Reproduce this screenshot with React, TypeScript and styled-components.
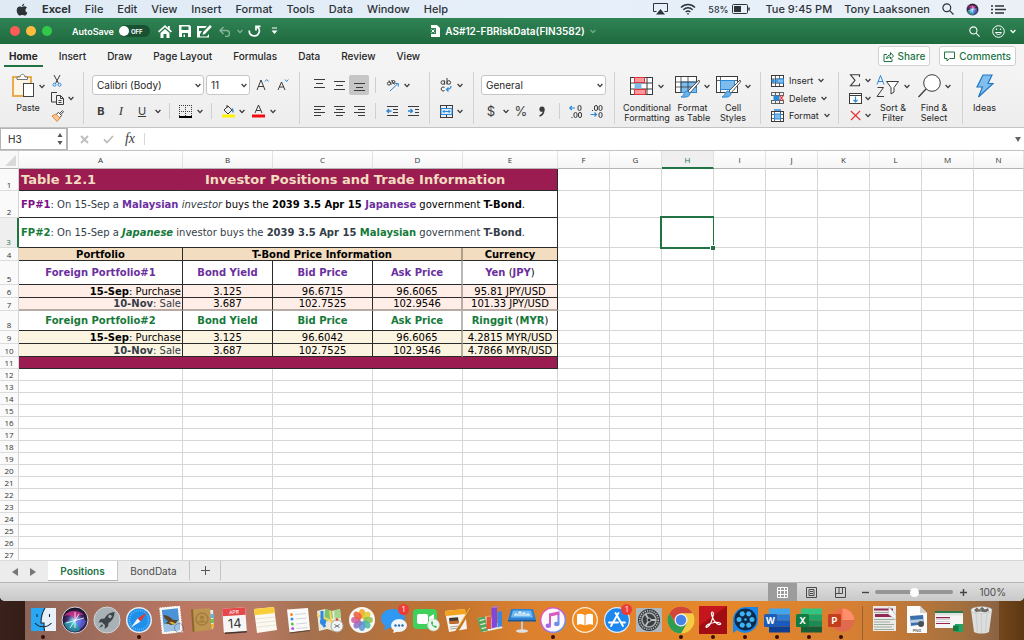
import React from "react";
import styled, { createGlobalStyle, css } from "styled-components";

/* ------------------------------------------------------------------ */
/* Base                                                                 */
/* ------------------------------------------------------------------ */

const UI = `Inter, "Liberation Sans", sans-serif`;
const SHEET = `"DejaVu Sans", sans-serif`;
const GREEN = "#217346";
const BLUE = "#2b88d8";
const INK = "#3b3b3b";

const GlobalStyle = createGlobalStyle`
  *, *::before, *::after { box-sizing: border-box; }
  body {
    margin: 0;
    font-family: ${UI};
    color: #262626;
    background: linear-gradient(90deg, #3a211b 0, #2c1713 60px, #a85a1c 50%, #7a4a1e 97%, #5c3813 100%);
  }
  button, input, select { font: inherit; color: inherit; margin: 0; }
  svg { display: block; flex: none; }
`;

const plainButton = css`
  border: 0;
  padding: 0;
  background: none;
  display: flex;
  align-items: center;
  justify-content: center;
  white-space: nowrap;
`;

/* ------------------------------------------------------------------ */
/* System menu bar                                                      */
/* ------------------------------------------------------------------ */

const MenuBar = styled.header`
  display: flex;
  align-items: center;
  justify-content: space-between;
  height: 18px;
  padding: 0 18px 0 16px;
  background: linear-gradient(90deg, #dfeaf5, #e6effa 60%, #eaf0f6);
  font-size: 11px;
  color: #2e3338;
`;

const MenuList = styled.nav`
  display: flex;
  align-items: center;
  gap: 14px;
`;

const MenuItem = styled.button<{ $strong?: boolean }>`
  ${plainButton}
  font-size: 11px;
  line-height: 18px;
  font-weight: ${(p) => (p.$strong ? 700 : 500)};
`;

const StatusItems = styled.div`
  display: flex;
  align-items: center;
  gap: 12px;
  font-weight: 500;
  white-space: nowrap;
`;

const Battery = styled.span`
  display: flex;
  align-items: center;
  gap: 4px;
  padding-right: 3px;
  font-size: 9px;
`;

/* ------------------------------------------------------------------ */
/* Window title bar                                                     */
/* ------------------------------------------------------------------ */

const Window = styled.div`
  border-radius: 0 0 5px 5px;
  overflow: hidden;
  background: #fff;
`;

const TitleBar = styled.div`
  display: grid;
  grid-template-columns: 1fr auto 1fr;
  align-items: center;
  height: 26px;
  padding: 0 8px 0 10px;
  background: linear-gradient(#2f8354, #1f6a3f);
  color: #fff;
`;

const TitleTools = styled.div`
  display: flex;
  align-items: center;
`;

const Lights = styled.div`
  display: flex;
  gap: 6px;
  margin-right: 20px;
`;

const Light = styled.button<{ $color: string }>`
  ${plainButton}
  width: 10px;
  height: 10px;
  border-radius: 50%;
  background: ${(p) => p.$color};
`;

const AutoSave = styled.label`
  display: flex;
  align-items: center;
  gap: 5px;
  margin-right: 5px;
  font-size: 9px;
  font-weight: 600;
`;

const Switch = styled.span`
  display: flex;
  align-items: center;
  gap: 2px;
  width: 31px;
  height: 12px;
  border-radius: 6px;
  background: #1a5132;
  font-size: 6px;
  font-weight: 700;
`;

const Knob = styled.input`
  appearance: none;
  width: 10px;
  height: 10px;
  border-radius: 50%;
  background: #fff;
`;

const TitleButton = styled.button<{ $w?: number; $dim?: boolean }>`
  ${plainButton}
  width: ${(p) => p.$w ?? 20}px;
  height: 20px;
  opacity: ${(p) => (p.$dim ? 0.45 : 1)};
`;

const DocTitle = styled.h1`
  display: flex;
  align-items: center;
  gap: 5px;
  margin: 0;
  font-size: 10px;
  font-weight: 600;
  white-space: nowrap;
`;

const TitleEnd = styled(TitleTools)`
  justify-content: flex-end;
`;

/* ------------------------------------------------------------------ */
/* Ribbon                                                               */
/* ------------------------------------------------------------------ */

const TabRow = styled.div`
  display: flex;
  align-items: center;
  justify-content: space-between;
  height: 24px;
  padding: 0 8px 0 4px;
  background: #f4f4f4;
`;

const Tabs = styled.div`
  display: flex;
  gap: 11px;
`;

const RibbonTab = styled.button<{ $active?: boolean }>`
  ${plainButton}
  height: 22px;
  padding: 2px 5px 0;
  font-size: 10px;
  font-weight: ${(p) => (p.$active ? 700 : 500)};
  border-bottom: 2px solid ${(p) => (p.$active ? GREEN : "transparent")};
`;

const Actions = styled.div`
  display: flex;
  gap: 9px;
`;

const ActionButton = styled.button`
  ${plainButton}
  gap: 4px;
  height: 20px;
  padding: 0 4px;
  border: 1px solid #d0d0d0;
  border-radius: 3px;
  background: #fff;
  color: ${GREEN};
  font-size: 10px;
  font-weight: 500;
`;

const Ribbon = styled.div`
  display: flex;
  height: 59px;
  padding: 4px 0 3px;
  background: linear-gradient(#f4f4f4, #ededed);
`;

const Group = styled.div<{ $w?: number; $pad: number; $last?: boolean }>`
  display: flex;
  flex: none;
  width: ${(p) => (p.$w ? p.$w + "px" : "auto")};
  padding-left: ${(p) => p.$pad}px;
  border-right: ${(p) => (p.$last ? 0 : 1)}px solid #d2d2d2;
`;

const Stack = styled.div`
  display: flex;
  flex-direction: column;
  justify-content: space-between;
`;

const Row = styled.div`
  display: flex;
  align-items: center;
  height: 26px;
`;

const SmallRow = styled.div`
  display: flex;
  align-items: center;
  height: 17px;
`;

const Tool = styled.button<{ $w: number; $on?: boolean }>`
  ${plainButton}
  width: ${(p) => p.$w}px;
  height: 20px;
  border-radius: 2px;
  background: ${(p) => (p.$on ? "#c6c6c6" : "none")};
  color: ${INK};
  font-size: 11px;
`;

const Divider = styled.span<{ $w: number }>`
  display: flex;
  justify-content: center;
  width: ${(p) => p.$w}px;
  height: 16px;
  &::before {
    content: "";
    width: 1px;
    background: #cfcfcf;
  }
`;

const SelectBox = styled.span<{ $w: number }>`
  display: grid;
  align-items: center;
  width: ${(p) => p.$w}px;
  & > * { grid-area: 1 / 1; }
  & > svg { justify-self: end; margin-right: 3px; pointer-events: none; }
  & + & { margin-left: 2px; }
`;

const Select = styled.select`
  appearance: none;
  width: 100%;
  height: 20px;
  padding: 0 4px;
  border: 1px solid #c6c6c6;
  border-radius: 3px;
  background: #fff;
  font-size: 10px;
`;

const BigTool = styled.button<{ $w: number }>`
  ${plainButton}
  flex-direction: column;
  justify-content: flex-start;
  width: ${(p) => p.$w}px;
  gap: 3px;
  font-size: 9px;
  font-weight: 400;
  line-height: 10px;
`;

const BigIcon = styled.span`
  display: flex;
  align-items: center;
  gap: 4px;
  height: 28px;
`;

const CellTool = styled.button`
  ${plainButton}
  justify-content: flex-start;
  gap: 5px;
  height: 17px;
  font-size: 9px;
  font-weight: 400;
`;

const SerifI = styled.i`
  font-family: "Liberation Serif", serif;
  font-size: 13px;
`;

const Glyph = styled.span`
  font-size: 13px;
  line-height: 20px;
`;

const FxLabel = styled.i`
  font-family: "Liberation Serif", serif;
  font-size: 14px;
`;

/* ------------------------------------------------------------------ */
/* Formula bar                                                          */
/* ------------------------------------------------------------------ */

const FormulaBar = styled.div`
  display: flex;
  align-items: center;
  height: 24px;
  border-top: 1px solid #c2c2c2;
  border-bottom: 1px solid #c2c2c2;
  background: #fff;
  padding-right: 2px;
`;

const NameBox = styled.label`
  display: flex;
  align-items: center;
  justify-content: space-between;
  width: 68px;
  height: 22px;
  padding: 0 3px 0 7px;
  border: 1px solid #b4b4b4;
  border-right-width: 2px;
`;

const NameInput = styled.input`
  width: 40px;
  border: 0;
  padding: 0;
  font-size: 10px;
  background: none;
`;

const FormulaInput = styled.input`
  flex: 1;
  min-width: 0;
  height: 12px;
  border: 0;
  border-left: 1px solid #d8d8d8;
  padding: 0 4px;
  background: none;
  font-size: 10px;
`;

/* ------------------------------------------------------------------ */
/* Grid                                                                 */
/* ------------------------------------------------------------------ */

const Grid = styled.table`
  width: 100%;
  table-layout: fixed;
  border-collapse: separate;
  border-spacing: 0;
  font-family: ${SHEET};
  font-size: 10px;
  line-height: 11px;
`;

const ColHead = styled.th<{ $active?: boolean }>`
  height: 18px;
  padding: 0;
  font-family: "Open Sans", sans-serif;
  font-size: 8px;
  font-weight: 400;
  color: ${(p) => (p.$active ? GREEN : "#333")};
  background: ${(p) => (p.$active ? "#efefef" : "linear-gradient(#fff, #f5f5f5)")};
  border-right: 1px solid #e2e2e2;
  border-bottom: ${(p) => (p.$active ? `2px solid ${GREEN}` : "1px solid #b4b4b4")};
`;

const Corner = styled.th`
  padding: 0 2px 2px 5px;
  vertical-align: bottom;
  background: #f8f8f8;
  border-right: 1px solid #e2e2e2;
  border-bottom: 1px solid #b4b4b4;
`;

const SheetRow = styled.tr<{ $h: number }>`
  height: ${(p) => p.$h}px;
`;

const RowHead = styled.th<{ $active?: boolean }>`
  padding: 0;
  vertical-align: bottom;
  font-family: "Open Sans", sans-serif;
  font-size: 8px;
  line-height: 10px;
  font-weight: 400;
  color: ${(p) => (p.$active ? GREEN : "#333")};
  background: ${(p) => (p.$active ? "#efefef" : "#fafafa")};
  border-right: ${(p) => (p.$active ? `2px solid ${GREEN}` : "1px solid #d4d4d4")};
  border-bottom: 1px solid #dcdcdc;
`;

const gridLine = "1px solid #d6d6d6";
const darkLine = "1px solid #2a2a2a";
const softLine = "2px solid rgba(0, 0, 0, 0.28)";

const Cell = styled.td`
  padding: 0;
  border-right: ${gridLine};
  border-bottom: ${gridLine};
`;

const SelectedCell = styled(Cell)`
  position: relative;
  &::before {
    content: "";
    position: absolute;
    inset: -2px -1px -2px -2px;
    border: 2px solid ${GREEN};
    border-right-width: 1px;
  }
  &::after {
    content: "";
    position: absolute;
    right: -2px;
    bottom: -3px;
    width: 5px;
    height: 5px;
    background: ${GREEN};
    border: 1px solid #fff;
    border-right: 0;
    border-bottom: 0;
  }
`;

const DataCell = styled.td<{
  $bg?: string;
  $align?: "left" | "right" | "center";
  $bold?: boolean;
  $color?: string;
  $softRight?: boolean;
  $softBottom?: boolean;
}>`
  padding: 0 1px;
  text-align: ${(p) => p.$align ?? "center"};
  font-weight: ${(p) => (p.$bold ? 700 : 400)};
  color: ${(p) => p.$color ?? "#000"};
  background: ${(p) => p.$bg ?? "#fff"};
  border-right: ${(p) => (p.$softRight ? softLine : darkLine)};
  border-bottom: ${(p) => (p.$softBottom ? softLine : darkLine)};
  white-space: nowrap;
`;

const BannerCell = styled(DataCell)<{ $indent: number }>`
  padding-left: ${(p) => p.$indent}px;
  border-right-color: ${(p) => p.$bg};
  text-align: left;
  font-size: 13px;
  line-height: 16px;
  &:nth-of-type(2) { border-right-color: #2a2a2a; }
`;

const NoteCell = styled(DataCell)`
  padding-left: 2px;
  text-align: left;
`;

const Ink = styled.span<{ $c?: string; $b?: boolean; $i?: boolean }>`
  color: ${(p) => p.$c ?? "inherit"};
  font-weight: ${(p) => (p.$b ? 700 : 400)};
  font-style: ${(p) => (p.$i ? "italic" : "normal")};
`;

/* ------------------------------------------------------------------ */
/* Sheet tabs and status bar                                            */
/* ------------------------------------------------------------------ */

const SheetBar = styled.div`
  display: flex;
  height: 22px;
  background: #ececec;
  border-bottom: 1px solid #b8b8b8;
`;

const SheetNav = styled.div`
  display: flex;
  align-items: center;
  gap: 2px;
  width: 48px;
  padding-left: 7px;
`;

const SheetTab = styled.button<{ $w: number; $active?: boolean }>`
  ${plainButton}
  width: ${(p) => p.$w}px;
  height: 20px;
  font-size: 10px;
  font-weight: ${(p) => (p.$active ? 600 : 400)};
  color: ${(p) => (p.$active ? GREEN : "#4c4c4c")};
  background: ${(p) => (p.$active ? "#fff" : "none")};
  border-right: 1px solid #c4c4c4;
  border-bottom: 1px solid ${(p) => (p.$active ? "#b0b0b0" : "transparent")};
`;

const StatusBar = styled.div`
  display: flex;
  align-items: center;
  justify-content: flex-end;
  height: 18px;
  padding-right: 18px;
  background: linear-gradient(#dedede, #c9c9c9);
  color: #4a4a4a;
`;

const ViewButton = styled.button<{ $on?: boolean }>`
  ${plainButton}
  width: 29px;
  height: 18px;
  background: ${(p) => (p.$on ? "#9c9c9c" : "none")};
  color: ${(p) => (p.$on ? "#fff" : "#4a4a4a")};
`;

const ZoomButton = styled.button`
  ${plainButton}
  width: 20px;
  height: 18px;
`;

const ZoomRange = styled.input`
  appearance: none;
  width: 78px;
  height: 4px;
  border-radius: 2px;
  background: #969696;
  &::-webkit-slider-thumb {
    appearance: none;
    width: 9px;
    height: 9px;
    border-radius: 50%;
    background: #fff;
    border: 0;
  }
`;

const ZoomValue = styled.span`
  width: 33px;
  text-align: right;
  font-size: 10px;
`;

/* ------------------------------------------------------------------ */
/* Dock                                                                 */
/* ------------------------------------------------------------------ */

const Dock = styled.nav`
  display: flex;
  width: 95%;
  min-width: 974px;
  height: 39px;
  margin: 0 auto;
  padding: 5px 2px 0;
  background: linear-gradient(90deg, #8b6458, #bd7862 17%, #b97a66 24%, #a3704f 29%, #c4742f 44%, #dd812e 52%, #e58829 72%, #d67f33 85%, #a3703f 96%, #8a6345);
`;

const DockApps = styled.div`
  display: flex;
  flex: 26;
`;

const DockItem = styled.button`
  ${plainButton}
  position: relative;
  flex: 1;
  flex-direction: column;
  justify-content: flex-start;
  height: 34px;
`;

const DockDocs = styled(DockApps)`
  flex: 4;
  margin-left: 6px;
  border-left: 1px solid #9a6230;
  padding-left: 6px;
`;

const Running = styled.span`
  width: 4px;
  height: 4px;
  margin-top: 1px;
  border-radius: 50%;
  background: #3a0d06;
`;

const Badge = styled.span`
  position: absolute;
  top: -2px;
  right: 1px;
  width: 11px;
  height: 11px;
  border-radius: 50%;
  background: #ee3b36;
  color: #fff;
  font-size: 7px;
  line-height: 11px;
`;

/* ------------------------------------------------------------------ */
/* Small icons                                                          */
/* ------------------------------------------------------------------ */

const Chevron = ({ color = INK }: { color?: string }) => (
  <svg width="6" height="5" viewBox="0 0 6 5" fill="none" stroke={color} strokeWidth="1.3">
    <path d="M.6 1 3 3.6 5.4 1" />
  </svg>
);

const Svg = ({ w, h = w, children, ...rest }: any) => (
  <svg width={w} height={h} viewBox={`0 0 ${w} ${h}`} fill="none" stroke={INK} strokeWidth="1" {...rest}>
    {children}
  </svg>
);

const Magnifier = ({ size = 12, color = "#2e3338" }) => (
  <svg width={size} height={size} viewBox="0 0 12 12" fill="none" stroke={color} strokeWidth="1.2">
    <circle cx="4.8" cy="4.8" r="3.9" />
    <path d="m7.7 7.7 3.8 3.8" />
  </svg>
);

const AppleLogo = () => (
  <svg width="12" height="13" viewBox="0 0 12 13" fill="#2e3338">
    <path d="M8.2.8c.1 1.3-1 2.5-2.2 2.5C5.9 2 7 .9 8.2.8ZM6 4c.5 0 1.3-.7 2.400-.7 1 0 2 .6 2.500 1.400-2.100 1.200-1.800 4.200.5 5-.5 1.300-1.500 2.900-2.700 2.900-.9 0-1.200-.6-2.400-.6-1.100 0-1.500.6-2.300.6C2.400 12.600.7 9.700.7 7.200c0-2.500 1.500-3.800 3-3.800 1 0 1.800.6 2.300.6Z" />
  </svg>
);

const LinesIcon = ({ rows }: { rows: [number, number, number][] }) => (
  <Svg w={13} h={13}>
    {rows.map(([x1, x2, y], i) => (
      <path key={i} d={`M${x1} ${y}.5H${x2}`} />
    ))}
  </Svg>
);

const SiriOrb = ({ size }: { size: number }) => (
  <svg width={size} height={size} viewBox="0 0 28 28">
    <defs>
      <radialGradient id="orb" cx=".5" cy=".55" r=".5">
        <stop offset="0" stopColor="#f4faff" />
        <stop offset=".25" stopColor="#7fb6e8" />
        <stop offset=".6" stopColor="#4b2d72" />
        <stop offset="1" stopColor="#171426" />
      </radialGradient>
    </defs>
    <circle cx="14" cy="14" r="13" fill="url(#orb)" stroke="#d9d3e0" strokeWidth="1" />
    <path d="M3 10c5-6 13-7 20-1-5-1-7 2-9 5-2-4-6-6-11-4Z" fill="#e0318c" opacity=".75" />
    <path d="M3 17c4-3 8-3 11-2 3 3 5 6 5 9-7 4-14 0-16-7Z" fill="#1ec8c0" opacity=".6" />
    <path d="M14 15c4-3 8-3 11 0-1 4-3 6-6 8Z" fill="#5a67e8" opacity=".7" />
    <path d="m5 17 18-5M14 6v16M9 22l9-14" stroke="#fff" strokeWidth="1" opacity=".8" />
  </svg>
);

/* ------------------------------------------------------------------ */
/* Dock icons                                                           */
/* ------------------------------------------------------------------ */

const D = ({ children }: { children: React.ReactNode }) => (
  <svg width="28" height="28" viewBox="0 0 28 28">{children}</svg>
);

const Office = ({ shades, tile, letter, round }: { shades: string[]; tile: string; letter: string; round?: boolean }) => (
  <D>
    {round ? (
      <>
        <circle cx="15.500" cy="14" r="11.500" fill={shades[0]} />
        <path d="M15.500 2.500A11.500 11.500 0 0 1 27 14H15.500Z" fill={shades[1]} />
        <path d="M4 14h23a11.500 11.500 0 0 1-23 0Z" fill={shades[2]} />
      </>
    ) : (
      shades.map((c, i) => <rect key={c} x="6" y={2.5 + i * 6} width="21" height="6" fill={c} />)
    )}
    <rect x="1" y="8" width="13" height="13" rx="1.500" fill={tile} />
    <text x="7.500" y="18" textAnchor="middle" fontFamily={UI} fontSize="9" fontWeight="700" fill="#fff">{letter}</text>
  </D>
);

const apps: { name: string; icon: React.ReactNode; running?: boolean; badge?: string }[] = [
  {
    name: "Finder", running: true,
    icon: (
      <D>
        <rect x="2" y="2" width="25" height="23" rx="1" fill="#2aa7f4" />
        <path d="M16 2h11v23H15.500c-.5-3-.7-6-.6-8H12c0-6 1.500-11 4-15Z" fill="#e8f1f9" />
        <path d="M8 8v3M20.500 8v3M6 17c4 5 12 5 16.500 0M16 2c-2.500 4-4 9-4 15h3c-.1 3 .1 6 .6 8" stroke="#1b2a3a" strokeWidth="1.100" fill="none" />
      </D>
    ),
  },
  { name: "Siri", icon: <SiriOrb size={28} /> },
  {
    name: "Launchpad",
    icon: (
      <D>
        <circle cx="14" cy="14" r="13" fill="#a9b1b6" stroke="#cfd4d6" />
        <path d="M21.500 6c-5 .3-8 3-10 6.500L7.500 13 5.500 16.500l3.500-.3 3 3-.5 3.800 3.500-2.500.5-3.500c3.500-2 6-5.500 6-11Z" fill="#3f464b" />
        <circle cx="17" cy="10.500" r="1.700" fill="#a9b1b6" />
        <path d="m9 18-3 4 4-2Z" fill="#3f464b" />
      </D>
    ),
  },
  {
    name: "Safari", running: true,
    icon: (
      <D>
        <circle cx="14" cy="14" r="13" fill="#e8ecef" />
        <circle cx="14" cy="14" r="11.500" fill="#1e8fea" />
        <circle cx="14" cy="14" r="9.500" fill="none" stroke="#8fd0ff" strokeWidth="1.500" strokeDasharray=".6 1.400" />
        <path d="m22 6.500-6.500 9-3-3Z" fill="#f2352c" />
        <path d="m6 21.500 6.500-9 3 3Z" fill="#f5f5f5" />
      </D>
    ),
  },
  {
    name: "Mail",
    icon: (
      <D>
        <g transform="rotate(-6 14 14)">
          <rect x="4" y="1" width="20" height="26" fill="#f7f7f2" stroke="#fff" strokeDasharray="1.500 1" />
          <rect x="6" y="3" width="16" height="22" fill="#4b93d8" />
          <path d="M6 18c5-3 10-1 16-3v10H6Z" fill="#9cc3e6" />
          <path d="M7 8c4 1 7 3 9 6l5 1-2 2c-2 2-5 3-7 1l-4-1 3-2c-2-2-4-4-4-7Z" fill="#5b4526" />
          <path d="M12 16c3-1 5 1 6 2l-3 1Z" fill="#d8b13a" />
        </g>
        <circle cx="22" cy="22" r="4.500" fill="none" stroke="#4a5560" strokeWidth=".8" opacity=".6" />
      </D>
    ),
  },
  {
    name: "Contacts",
    icon: (
      <D>
        <path d="M22 4h3l.8 17-2 3Z" fill="#e9eef0" />
        <path d="M23 8h3v4h-3Z" fill="#58b7e0" />
        <path d="M23 13h3v4h-3Z" fill="#76c05a" />
        <path d="M23 18h3v4h-3Z" fill="#f0b23a" />
        <path d="M3 3.500 22 2l1.500 22-19 2Z" fill="#bd9450" />
        <path d="m3 3.500 2-.2 1.500 22.500-2 .2Z" fill="#8b6531" />
        <circle cx="14" cy="13" r="6" fill="none" stroke="#a47c3e" strokeWidth="1.400" />
        <circle cx="14" cy="11.500" r="2" fill="#a47c3e" />
        <path d="M10 16.500c1-3 7-3 8 0Z" fill="#a47c3e" />
      </D>
    ),
  },
  {
    name: "Calendar",
    icon: (
      <D>
        <g transform="rotate(-4 14 14)">
          <rect x="3" y="2" width="23" height="24" rx="1" fill="#f6f6f6" />
          <path d="M3 2h23v7.500H3Z" fill="#e5484a" />
          <path d="M4 26.500h22" stroke="#46352e" strokeWidth="1.500" />
          <text x="14.500" y="8" textAnchor="middle" fontFamily={UI} fontSize="5" fill="#fff">APR</text>
          <text x="14.500" y="22" textAnchor="middle" fontFamily={UI} fontSize="13" fill="#333">14</text>
        </g>
      </D>
    ),
  },
  {
    name: "Notes",
    icon: (
      <D>
        <path d="M2 3 22 1l3 23-20 3Z" fill="#fbf9f0" />
        <path d="m2 3 20-2 .8 6-20 2.200Z" fill="#f9ce3a" />
        <path d="m4 13 19-2M4.500 17l19-2M5 21l19-2" stroke="#e2dfd2" strokeWidth=".8" />
      </D>
    ),
  },
  {
    name: "Reminders",
    icon: (
      <D>
        <path d="M3 3.500 24 2l2 22-20.500 2.500Z" fill="#fafafa" />
        <path d="m5.500 27 20.500-2.500" stroke="#5c4238" />
        <path d="m11 8.500 11-1M11.500 13l11-1M12 18l11-1M12.500 22.500l11-1" stroke="#d5d5d5" />
        <circle cx="7.500" cy="8.500" r="1.500" fill="#f58a2d" />
        <circle cx="8" cy="13" r="1.500" fill="#2f8ff0" />
        <circle cx="8.300" cy="18" r="1.500" fill="#5cc24a" />
        <circle cx="8.700" cy="22.500" r="1.500" fill="#b45be0" />
      </D>
    ),
  },
  {
    name: "Maps",
    icon: (
      <D>
        <path d="m1 5 8-2 7 2 8-2 2 20-8 2-7-2-8 2Z" fill="#e9ead9" />
        <path d="m9 3 7 2 1 7-9 5Z" fill="#7cc36a" />
        <path d="m18 4.500 6-1.500 1 9-6 1Z" fill="#a5d68d" />
        <path d="m1 9 22 9M14 5l3 20" stroke="#f5d265" strokeWidth="2" />
        <path d="M6 5v11l3 5" stroke="#2f86e6" strokeWidth="3" fill="none" />
        <circle cx="7" cy="16" r="3" fill="#2f86e6" />
        <circle cx="21" cy="20" r="6" fill="#f2f4f4" stroke="#a5adb0" />
        <path d="m18.500 18.500 5 3m0-3-5 3" stroke="#6c7479" />
        <circle cx="21" cy="13.500" r="1.200" fill="#e63c37" />
      </D>
    ),
  },
  {
    name: "Photos",
    icon: (
      <D>
        <circle cx="14" cy="14" r="13" fill="#f7f7f5" />
        {["#f6a21d", "#dfcb2c", "#8cc24a", "#4bb79a", "#5596d6", "#8a6fc4", "#d0589a", "#ec5a3e"].map((c, i) => (
          <ellipse key={c} cx="14" cy="7.800" rx="3.200" ry="4.700" fill={c} opacity=".85" transform={`rotate(${i * 45} 14 14)`} />
        ))}
      </D>
    ),
  },
  {
    name: "Messages", badge: "1",
    icon: (
      <D>
        <path d="M13 3c7 0 12 4 12 9.500S20 22 13 22c-1.500 0-3-.2-4-.5-1.500 1.500-3.500 2.500-6 2.500 1.500-1 2-2.500 2-4.500-2.500-1.700-4-4-4-7C1 7 6 3 13 3Z" fill="#2f98f2" />
        <ellipse cx="19" cy="19.500" rx="8" ry="6.500" fill="#f1f6fb" />
        <path d="m14 24-1 3 5-1.500Z" fill="#f1f6fb" />
        <circle cx="15.500" cy="19.500" r="1.200" fill="#2a6ba8" /><circle cx="19" cy="19.500" r="1.200" fill="#2a6ba8" /><circle cx="22.500" cy="19.500" r="1.200" fill="#2a6ba8" />
      </D>
    ),
  },
  {
    name: "FaceTime",
    icon: (
      <D>
        <rect x="1" y="3" width="24" height="20" rx="4" fill="#3ed15c" />
        <rect x="5" y="8" width="11" height="10" rx="2" fill="#fff" />
        <path d="m17 11 5-3v10l-5-3Z" fill="#fff" />
        <circle cx="21.500" cy="19" r="6" fill="#ecf6ee" stroke="#b9cabc" strokeWidth=".6" />
        <path d="M19 16c0 3 2 5 5 6l1-1.500-2-1-1 .6c-.8-.5-1.300-1.200-1.500-2l.7-.8-.7-2Z" fill="#34b64f" />
      </D>
    ),
  },
  {
    name: "Pages",
    icon: (
      <D>
        <path d="m1 5 20-2 2 20-18 3Z" fill="#f7f3ec" />
        <path d="m1 5 20-2 .6 5L1.800 10Z" fill="#f5a21f" />
        <path d="m5 12 9-.8.8 6-9 .8Z" fill="#3e3933" />
        <path d="m5.500 15 9-.5.4 2.700-9 .8Z" fill="#c66a28" />
        <path d="m6 21 9-1M6.500 23l8-1" stroke="#9c968c" strokeWidth=".8" />
        <path d="M27 2 15 22l-3 4" stroke="#c2741d" strokeWidth="2.600" fill="none" />
        <path d="M26 2 15 20" stroke="#f7b14a" strokeWidth="1" />
      </D>
    ),
  },
  {
    name: "Numbers",
    icon: (
      <D>
        <path d="m1 12 13-2 13 12-20 4Z" fill="#e9eee6" />
        <path d="m1 12 8-1.500 3 14-7 1.500Z" fill="#58a55a" />
        <path d="m3.500 14.500 5-1m-4 5 5-1m-4 5 5-1" stroke="#fff" />
        <path d="M10.500 11h4.500v12h-4.500Z" fill="#e8562f" />
        <path d="M15.500 2 21 1v20l-5.500 1.500Z" fill="#8047d8" />
        <path d="m21.500 6 4.500-1v15l-4.500 1.500Z" fill="#3d86dc" />
        <path d="m15.500 2 1.500-1.500L22.500 0 21 1.500Z" fill="#a77bf0" />
        <path d="m10.500 11 1.500-1.500h3.500L15 11Z" fill="#f28c5b" />
      </D>
    ),
  },
  {
    name: "Keynote",
    icon: (
      <D>
        <path d="M3 3h22l3 11H0Z" fill="#2e7fd0" />
        <path d="M5 4.500h18l2 7H3Z" fill="#6fbaf0" />
        <path d="M7 10V8h2v2m2 0V6h2v4m2 0V7h2v3m2 0V8h2v2" stroke="#fff" strokeWidth="1" fill="none" />
        <path d="M0 14h28v1.500H0Z" fill="#1a5796" />
        <path d="M13 15.500h2V24h-2Z" fill="#c3c8cc" />
        <ellipse cx="14" cy="25" rx="6" ry="1.800" fill="#dde1e3" />
      </D>
    ),
  },
  {
    name: "iTunes", running: true,
    icon: (
      <D>
        <defs><linearGradient id="note" x2="1" y2="1"><stop stopColor="#f8508f" /><stop offset=".55" stopColor="#b263e6" /><stop offset="1" stopColor="#39b3ef" /></linearGradient></defs>
        <circle cx="14" cy="14" r="12.300" fill="#fbf7fb" stroke="url(#note)" strokeWidth="1.500" />
        <path d="M11 9v10.500M19.500 7v10.500M11 9.500l8.500-2" stroke="url(#note)" strokeWidth="2" fill="none" />
        <path d="m10 7.500 10.500-2.200v3L10 10.500Z" fill="#d75bc0" />
        <ellipse cx="9.300" cy="19.800" rx="2.700" ry="2.200" fill="#a567e6" /><ellipse cx="17.800" cy="17.900" rx="2.700" ry="2.200" fill="#6f8bea" />
      </D>
    ),
  },
  {
    name: "Books",
    icon: (
      <D>
        <circle cx="14" cy="14" r="13" fill="#f5eadb" />
        <circle cx="14" cy="14" r="11.700" fill="#f58c1c" />
        <path d="M13.500 9C11 7.500 8 7.500 6 8.500V19c2-1 5-1 7.500.5Zm1 0c2.500-1.500 5.500-1.500 7.500-.5V19c-2-1-5-1-7.500.5Z" fill="#fff" />
      </D>
    ),
  },
  {
    name: "App Store", badge: "1",
    icon: (
      <D>
        <circle cx="14" cy="14" r="13" fill="#dcecf8" />
        <circle cx="14" cy="14" r="11.800" fill="#1c87ee" />
        <path d="m15.500 7-7.500 13M12.500 7 20 20M6 16.500h9m3.500 0H22" stroke="#fff" strokeWidth="1.900" strokeLinecap="round" />
      </D>
    ),
  },
  {
    name: "System Preferences",
    icon: (
      <D>
        <rect x="1" y="2" width="26" height="24" fill="#aeb7bd" />
        <circle cx="14" cy="14" r="11" fill="#34383b" />
        <circle cx="14" cy="14" r="9.300" fill="none" stroke="#b9bcbd" strokeWidth="1.600" strokeDasharray="1.300 1" />
        <circle cx="14" cy="14" r="7" fill="#3a3d3f" stroke="#a8abac" strokeWidth="1.600" />
        <path d="M14 14h7M14 14l-3.500 6M14 14l-3.500-6" stroke="#b9bcbd" strokeWidth="1.800" />
        <circle cx="14" cy="14" r="2" fill="#2b2e30" stroke="#b9bcbd" />
      </D>
    ),
  },
  {
    name: "Chrome", running: true,
    icon: (
      <D>
        <circle cx="14" cy="14" r="13.500" fill="#f6cb44" />
        <path d="M2.300 7.250A13.500 13.500 0 0 1 25.700 7.250H14L8.200 17.400Z" fill="#d0463b" />
        <path d="M2.300 7.250A13.500 13.500 0 0 0 14 27.500l5.800-10.100H8.200Z" fill="#2f9c54" />
        <circle cx="14" cy="14" r="6.500" fill="#f2f2f2" />
        <circle cx="14" cy="14" r="5.200" fill="#4784ea" />
      </D>
    ),
  },
  {
    name: "Acrobat", running: true,
    icon: (
      <D>
        <rect x="0" y="0" width="28" height="28" fill="#a20d13" />
        <path d="M0 0h28L0 20Z" fill="#c4161c" />
        <path d="M13.500 6c-2 0-.8 4 1 7.500 1.700 3 4.500 5.500 6.500 5 2-.8-.5-2.700-5.500-2-4 .5-8.500 2.500-8.500 4.200 0 1.500 2.500.5 4.500-3.200C13.500 13.500 15.500 6 13.500 6Z" fill="none" stroke="#fff" strokeWidth="1.200" />
      </D>
    ),
  },
  {
    name: "Video player", running: true,
    icon: (
      <D>
        <path d="M14 1h13v13A13 13 0 0 1 6 24l-4 3V14A13 13 0 0 1 14 1Z" fill="#1b86e8" />
        <circle cx="14.500" cy="13.500" r="11" fill="#0d2a4c" />
        {[0, 60, 120, 180, 240, 300].map((a) => (
          <circle key={a} cx="14.500" cy="7" r="2.500" fill="#3fb4f3" transform={`rotate(${a + 30} 14.500 13.500)`} />
        ))}
        <circle cx="14.500" cy="13.500" r="1.300" fill="#3fb4f3" />
      </D>
    ),
  },
  { name: "Word", running: true, icon: <Office shades={["#41a5ee", "#2b7cd3", "#185abd", "#103f91"]} tile="#1f5cb8" letter="W" /> },
  { name: "Excel", running: true, icon: <Office shades={["#33c481", "#21a366", "#1b8a54", "#185c37"]} tile="#107c41" letter="X" /> },
  { name: "PowerPoint", running: true, icon: <Office shades={["#ed6c47", "#ff8f6b", "#e06a4e"]} tile="#c43e1c" letter="P" round /> },
];

const documents: { name: string; icon: React.ReactNode }[] = [
  {
    name: "Downloads stack",
    icon: (
      <D>
        <path d="M2 0h23v25H2Z" fill="#eceae8" />
        <path d="M3 2.500h19v2H3ZM4 8h18v3H4Z" fill="#8f2a55" />
        <path d="M3 6.500h20M3 13.500h20M3 16h16M3 18.500h20M3 21h18M3 23.500h20" stroke="#93a596" strokeWidth=".9" />
        <path d="m18 1 7 8v5l-8-6Z" fill="#f8f8f8" stroke="#999" strokeWidth=".5" />
      </D>
    ),
  },
  {
    name: "PNG image",
    icon: (
      <D>
        <path d="M4 0h13l7 7v20H4Z" fill="#fbfbfb" />
        <path d="M17 0v7h7Z" fill="#d5d5d5" />
        <path d="m7 10 13-1 1 9-13 2Z" fill="#3a6fae" />
        <path d="m7.300 14 13-1 .4 3-13 1Z" fill="#b9cfe2" />
        <circle cx="18" cy="18" r="3" fill="#4b5055" />
        <text x="14" y="25.500" textAnchor="middle" fontFamily={UI} fontSize="4" fontWeight="600" fill="#666">PNG</text>
      </D>
    ),
  },
  {
    name: "Workbook window",
    icon: (
      <D>
        <rect x="0" y="5" width="28" height="17" fill="#f5f5f5" />
        <path d="M0 5h28v2H0Z" fill="#2a7a4b" />
        <path d="M0 7h28v2.500H0Z" fill="#dfe3e0" />
        <path d="M1 11h14v1.300H1ZM1 17h14v1H1Z" fill="#9b1e50" />
        <path d="M1 13.500h14M1 15.500h14" stroke="#bbb" strokeWidth=".6" />
        <rect x="20" y="18" width="8" height="8" fill="#21a366" />
        <rect x="18" y="19.500" width="5.500" height="5.500" fill="#107c41" />
      </D>
    ),
  },
  {
    name: "Trash",
    icon: (
      <D>
        <path d="M4 4h21l-3 22c-4 2-11 2-15 0Z" fill="#dcdddd" />
        <path d="m9 6 1.500 20M14.500 6v21M20 6l-1.500 20" stroke="#cdcfd0" strokeWidth="1.300" />
        <ellipse cx="14.500" cy="4" rx="10.500" ry="3.200" fill="#f3f3f3" stroke="#b9bbbc" strokeWidth=".7" />
        <path d="m7 4 3-2.500 2 2L15 1l3 2.500L21 2l1 3-4 1.200-5-.7-4 .5Z" fill="#63696b" />
        <path d="m9 4 2-1 1 2Zm7 0 2-1 0 2Z" fill="#cf5b3f" />
        <path d="m12 4 2-1.500L15 5Z" fill="#6fae6a" />
      </D>
    ),
  },
];

/* ------------------------------------------------------------------ */
/* Worksheet data                                                       */
/* ------------------------------------------------------------------ */

const WINE = "#9b1c50";
const TAN = "#f2ddc0";
const PURPLE = "#6b2fa0";
const LEAF = "#157a3a";
const SLATE = "#333d47";

const columns = ["A", "B", "C", "D", "E", "F", "G", "H", "I", "J", "K", "L", "M", "N"];
const widths = [164, 90, 100, 90, 95, 52, 52, 52, 52, 52, 52, 52, 52];

type Trade = { n: number; h: number; date: string; slate?: boolean; kind: string; values: string[]; bg: string; soft?: boolean };

const trades: Record<string, Trade[]> = {
  one: [
    { n: 6, h: 13, date: "15-Sep", kind: "Purchase", values: ["3.125", "96.6715", "96.6065", "95.81 JPY/USD"], bg: "#ffeee7" },
    { n: 7, h: 13, date: "10-Nov", slate: true, kind: "Sale", values: ["3.687", "102.7525", "102.9546", "101.33 JPY/USD"], bg: "#ffeee7", soft: true },
  ],
  two: [
    { n: 9, h: 13, date: "15-Sep", kind: "Purchase", values: ["3.125", "96.6042", "96.6065", "4.2815 MYR/USD"], bg: "#fbf4e0" },
    { n: 10, h: 13, date: "10-Nov", slate: true, kind: "Sale", values: ["3.687", "102.7525", "102.9546", "4.7866 MYR/USD"], bg: "#fbf4e0" },
  ],
};

const Rest = ({ selected }: { selected?: boolean }) => (
  <>
    {columns.slice(5).map((c) => (selected && c === "H" ? <SelectedCell key={c} /> : <Cell key={c} />))}
  </>
);

const TradeRow = ({ t }: { t: Trade }) => (
  <SheetRow $h={t.h}>
    <RowHead scope="row">{t.n}</RowHead>
    <DataCell $bg={t.bg} $align="right" $softBottom={t.soft}>
      <Ink $b $c={t.slate ? SLATE : undefined}>{t.date}</Ink>
      <Ink $c={t.slate ? SLATE : undefined}>: {t.kind}</Ink>
    </DataCell>
    {t.values.map((v, i) => (
      <DataCell key={i} $bg={t.bg} $softBottom={t.soft} $softRight={i === 2}>{v}</DataCell>
    ))}
    <Rest />
  </SheetRow>
);

const HeadingRow = ({ n, h, name, color, currency, code }: { n: number; h: number; name: string; color: string; currency: string; code: string }) => (
  <SheetRow $h={h}>
    <RowHead scope="row">{n}</RowHead>
    <DataCell $bold $color={color}>{name}</DataCell>
    <DataCell $bold $color={color}>Bond Yield</DataCell>
    <DataCell $bold $color={color}>Bid Price</DataCell>
    <DataCell $bold $color={color} $softRight>Ask Price</DataCell>
    <DataCell>
      <Ink $b $c={color}>{currency}</Ink> (<Ink $b $c={color}>{code}</Ink>)
    </DataCell>
    <Rest />
  </SheetRow>
);

const Worksheet = () => (
  <Grid>
    <colgroup>
      <col style={{ width: 19 }} />
      {widths.map((w, i) => <col key={i} style={{ width: w }} />)}
      <col />
    </colgroup>
    <thead>
      <tr>
        <Corner aria-label="Select all">
          <svg width="11" height="11" viewBox="0 0 11 11"><path d="M11 0v11H0Z" fill="#d9d9d9" /></svg>
        </Corner>
        {columns.map((c) => <ColHead key={c} scope="col" $active={c === "H"}>{c}</ColHead>)}
      </tr>
    </thead>
    <tbody>
      <SheetRow $h={22}>
        <RowHead scope="row">1</RowHead>
        <BannerCell $bg={WINE} $bold $color={TAN} $indent={2}>Table 12.1</BannerCell>
        <BannerCell $bg={WINE} $bold $color={TAN} $indent={22} colSpan={4}>Investor Positions and Trade Information</BannerCell>
        <Rest />
      </SheetRow>
      <SheetRow $h={27}>
        <RowHead scope="row">2</RowHead>
        <NoteCell colSpan={5}>
          <Ink $b $c="#7d0f86">FP#1</Ink><Ink $c={SLATE}>: On 15-Sep a </Ink><Ink $b $c={PURPLE}>Malaysian</Ink>{" "}
          <Ink $i $c={SLATE}>investor</Ink> buys the <Ink $b>2039 3.5 Apr 15 </Ink><Ink $b $c={PURPLE}>Japanese</Ink> government <Ink $b>T-Bond</Ink>.
        </NoteCell>
        <Rest />
      </SheetRow>
      <SheetRow $h={30}>
        <RowHead scope="row" $active>3</RowHead>
        <NoteCell colSpan={5} $color={SLATE}>
          <Ink $b $c={LEAF}>FP#2</Ink>: On 15-Sep a <Ink $b $i $c={LEAF}>Japanese</Ink> investor buys the{" "}
          <Ink $b>2039 3.5 Apr 15 </Ink><Ink $b $c={LEAF}>Malaysian</Ink> government <Ink $b>T-Bond</Ink>.
        </NoteCell>
        <Rest selected />
      </SheetRow>
      <SheetRow $h={13}>
        <RowHead scope="row">4</RowHead>
        <DataCell $bg={TAN} $bold>Portfolio</DataCell>
        <DataCell $bg={TAN} $bold $softRight colSpan={3}>T-Bond Price Information</DataCell>
        <DataCell $bg={TAN} $bold>Currency</DataCell>
        <Rest />
      </SheetRow>
      <HeadingRow n={5} h={24} name="Foreign Portfolio#1" color={PURPLE} currency="Yen" code="JPY" />
      {trades.one.map((t) => <TradeRow key={t.n} t={t} />)}
      <HeadingRow n={8} h={20} name="Foreign Portfolio#2" color={LEAF} currency="Ringgit" code="MYR" />
      {trades.two.map((t) => <TradeRow key={t.n} t={t} />)}
      <SheetRow $h={12}>
        <RowHead scope="row">11</RowHead>
        <DataCell $bg={WINE} colSpan={5} />
        <Rest />
      </SheetRow>
      {Array.from({ length: 16 }, (_, i) => (
        <SheetRow key={i} $h={12}>
          <RowHead scope="row">{i + 12}</RowHead>
          {columns.map((c) => <Cell key={c} />)}
        </SheetRow>
      ))}
    </tbody>
  </Grid>
);

/* ------------------------------------------------------------------ */
/* Ribbon groups                                                        */
/* ------------------------------------------------------------------ */

const More = ({ w, label }: { w: number; label: string }) => (
  <Tool $w={w} aria-label={label}><Chevron /></Tool>
);

const RibbonTools = () => (
  <Ribbon>
    <Group $w={84} $pad={10}>
      <BigTool $w={36}>
        <BigIcon>
          <Svg w={23} h={26}>
            <rect x="1" y="4" width="18" height="19" fill="#fdf6e6" stroke="#e8a33d" strokeWidth="1.800" />
            <path d="M5 6.500V4h3c0-3.500 5-3.500 5 0h2.500v2.500Z" fill="#fff" stroke="#777" />
            <rect x="11.500" y="10.500" width="10" height="13" fill="#fff" stroke="#444" />
          </Svg>
          <Chevron />
        </BigIcon>
        Paste
      </BigTool>
      <Stack>
        <SmallRow>
          <Tool $w={22} aria-label="Cut">
            <Svg w={10} h={13}>
              <path d="m2 1 4.500 8.500M8 1 3.500 9.500" />
              <circle cx="2.500" cy="10.700" r="1.500" stroke={BLUE} /><circle cx="7.500" cy="10.700" r="1.500" stroke={BLUE} />
            </Svg>
          </Tool>
        </SmallRow>
        <SmallRow>
          <Tool $w={22} aria-label="Copy">
            <Svg w={13} h={13}>
              <path d="M5 10H.5V.5H6M5.500 3.500h4l3 3v6h-7ZM9.500 3.500v3h3M7.500 8.500h3M7.500 10.500h3" />
            </Svg>
          </Tool>
          <More w={6} label="Copy options" />
        </SmallRow>
        <SmallRow>
          <Tool $w={22} aria-label="Format painter">
            <Svg w={13} h={12}>
              <path d="m1 6 4-2 4 4-3 3.500Z" fill="#f8c89a" stroke="#e8862e" />
              <path d="m5.500 4 2-1.500 3 3L9 7.500M8.500 3.500 11.500.7l1 1-2.800 3" fill="#fff" />
            </Svg>
          </Tool>
        </SmallRow>
      </Stack>
    </Group>

    <Group $w={216} $pad={8}>
      <Stack>
        <Row>
          <SelectBox $w={112}>
            <Select aria-label="Font" defaultValue="c"><option value="c">Calibri (Body)</option></Select>
            <Chevron />
          </SelectBox>
          <SelectBox $w={44}>
            <Select aria-label="Font size" defaultValue="11"><option>11</option></Select>
            <Chevron />
          </SelectBox>
          <Tool $w={24} aria-label="Increase font size">
            <Svg w={13} h={14}><path d="m1 12 4-10 4 10M2.500 8.500h5" /><path d="m9 3.500 1.700-2 1.800 2" stroke={BLUE} /></Svg>
          </Tool>
          <Tool $w={18} aria-label="Decrease font size">
            <Svg w={12} h={14}><path d="M1 12 4.500 4 8 12M2.300 9h4.500" /><path d="m8 1.500 1.600 2 1.700-2" stroke={BLUE} /></Svg>
          </Tool>
        </Row>
        <Row>
          <Tool $w={18} aria-label="Bold"><b>B</b></Tool>
          <Tool $w={22} aria-label="Italic"><SerifI>I</SerifI></Tool>
          <Tool $w={20} aria-label="Underline"><u>U</u></Tool>
          <More w={12} label="Underline options" />
          <Divider $w={10} />
          <Tool $w={22} aria-label="Borders">
            <Svg w={13} h={13}>
              <path d="M.5 0v11M6.500 0v11M12.500 0v11M0 .5h13M0 6.500h13" strokeDasharray="1 1" />
              <path d="M0 12h13" stroke="#000" strokeWidth="2" />
            </Svg>
          </Tool>
          <More w={8} label="Border options" />
          <Divider $w={14} />
          <Tool $w={20} aria-label="Fill colour">
            <Svg w={13} h={14}>
              <path d="m2 6 4-4 4 4-4 4ZM5 4V1" /><path d="M10 4.500c1 1 1.300 2 .8 4" stroke={BLUE} strokeWidth="1.500" />
              <path d="M0 12h13" stroke="#fff200" strokeWidth="3" />
            </Svg>
          </Tool>
          <More w={8} label="Fill options" />
          <Tool $w={24} aria-label="Font colour">
            <Svg w={13} h={14}><path d="m3 9 3.500-8L10 9M4.200 6.500h4.600" /><path d="M0 12h13" stroke="#f50a14" strokeWidth="3" /></Svg>
          </Tool>
          <More w={6} label="Font colour options" />
        </Row>
      </Stack>
    </Group>

    <Group $w={130} $pad={9}>
      <Stack>
        <Row>
          <Tool $w={20} aria-label="Top align"><LinesIcon rows={[[1, 12, 0], [3, 10, 4], [1, 12, 8]]} /></Tool>
          <Tool $w={20} aria-label="Middle align"><LinesIcon rows={[[1, 12, 2], [3, 10, 6], [1, 12, 10]]} /></Tool>
          <Tool $w={20} $on aria-label="Bottom align"><LinesIcon rows={[[1, 12, 4], [3, 10, 8], [1, 12, 11]]} /></Tool>
          <Divider $w={12} />
          <Tool $w={22} aria-label="Orientation">
            <Svg w={13} h={13}>
              <circle cx="3" cy="4.500" r="1.600" /><path d="m3 1.500 2.500 4M5.500 1l3 4.500" /><circle cx="7.500" cy="3" r="1.500" />
              <path d="m4 12 8-7.500M12.300 7.500v-3h-3" stroke={BLUE} />
            </Svg>
          </Tool>
          <More w={8} label="Orientation options" />
        </Row>
        <Row>
          <Tool $w={20} aria-label="Align left"><LinesIcon rows={[[1, 12, 1], [1, 8, 4], [1, 12, 7], [1, 8, 10]]} /></Tool>
          <Tool $w={20} aria-label="Centre"><LinesIcon rows={[[1, 12, 1], [3, 10, 4], [1, 12, 7], [3, 10, 10]]} /></Tool>
          <Tool $w={20} aria-label="Align right"><LinesIcon rows={[[1, 12, 1], [5, 12, 4], [1, 12, 7], [5, 12, 10]]} /></Tool>
          <Divider $w={12} />
          <Tool $w={22} aria-label="Decrease indent">
            <Svg w={13} h={12}><path d="M1 1.500h11M7 4.500h5M7 7.500h5M1 10.500h11" /><path d="M5.500 6H1m2-2-2 2 2 2" stroke={BLUE} strokeWidth="1.300" /></Svg>
          </Tool>
          <Tool $w={20} aria-label="Increase indent">
            <Svg w={13} h={12}><path d="M1 1.500h11M8 4.500h4M8 7.500h4M1 10.500h11" /><path d="M1 6h4.500m-2-2 2 2-2 2" stroke={BLUE} strokeWidth="1.300" /></Svg>
          </Tool>
        </Row>
      </Stack>
    </Group>

    <Group $w={44} $pad={7}>
      <Stack>
        <Row>
          <Tool $w={18} aria-label="Wrap text">
            <Svg w={12} h={14}>
              <circle cx="2.800" cy="4.500" r="1.800" /><path d="M4.600 2.500v4.200M7 0v6.500" /><circle cx="8.800" cy="4.500" r="1.800" />
              <path d="M4.500 9.500a2 2 0 1 0 0 3" /><path d="M11 8c0 2.500-1.500 3.500-4.500 3.500m2-2-2 2 2 2" stroke={BLUE} strokeWidth="1.200" />
            </Svg>
          </Tool>
          <More w={10} label="Wrap options" />
        </Row>
        <Row>
          <Tool $w={18} aria-label="Merge cells">
            <Svg w={13} h={13}>
              <rect x=".5" y=".5" width="12" height="12" /><path d="M6.500.5V3M6.500 10v2.500" />
              <rect x="1" y="3.500" width="11" height="6" fill="#d8ecfb" stroke={BLUE} />
              <path d="M3 6.500h7M4.500 5 3 6.500 4.500 8M8.500 5 10 6.500 8.500 8" stroke={BLUE} />
            </Svg>
          </Tool>
          <More w={10} label="Merge options" />
        </Row>
      </Stack>
    </Group>

    <Group $w={141} $pad={7}>
      <Stack>
        <Row>
          <SelectBox $w={125}>
            <Select aria-label="Number format" defaultValue="General"><option>General</option></Select>
            <Chevron />
          </SelectBox>
        </Row>
        <Row>
          <Tool $w={20} aria-label="Currency"><Glyph>$</Glyph></Tool>
          <More w={10} label="Currency options" />
          <Tool $w={20} aria-label="Percent"><Glyph>%</Glyph></Tool>
          <Tool $w={22} aria-label="Comma style">
            <Svg w={8} h={11}><circle cx="4" cy="3.200" r="2.600" fill={INK} stroke="none" /><path d="M5.700 3.500C6 7 4.500 9 1.500 10" strokeWidth="1.500" /></Svg>
          </Tool>
          <Divider $w={12} />
          <Tool $w={20} aria-label="Increase decimals">
            <Svg w={13} h={13}>
              <path d="M6 3H.8m2-2-2 2 2 2" stroke={BLUE} strokeWidth="1.200" />
              <rect x="9" y=".5" width="3" height="5" rx="1.500" /><rect x="5" y="7.500" width="3" height="5" rx="1.500" /><rect x="9.500" y="7.500" width="3" height="5" rx="1.500" /><path d="M2.500 12.500h1" />
            </Svg>
          </Tool>
          <Tool $w={22} aria-label="Decrease decimals">
            <Svg w={13} h={13}>
              <path d="M.5 9.500h6m-2-2 2 2-2 2" stroke={BLUE} strokeWidth="1.200" />
              <rect x="4.500" y=".5" width="3" height="5" rx="1.500" /><rect x="9" y=".5" width="3" height="5" rx="1.500" /><rect x="9" y="7.500" width="3" height="5" rx="1.500" /><path d="M2 5.500h1" />
            </Svg>
          </Tool>
        </Row>
      </Stack>
    </Group>

    <Group $w={146} $pad={8}>
      <BigTool $w={48}>
        <BigIcon>
          <Svg w={24} h={20}>
            <rect x=".5" y="1.500" width="22" height="17" fill="#fff" /><path d="M.5 7h22M.5 13h22M17 1.500v17" />
            <rect x="4.500" y="1.500" width="10" height="5" fill="#f9989c" stroke="#e0343b" />
            <rect x="4.500" y="7.500" width="7" height="5" fill="#7dbcec" stroke="none" />
            <rect x="4.500" y="13.500" width="11" height="5" fill="#f9989c" stroke="#e0343b" />
          </Svg>
          <Chevron />
        </BigIcon>
        <span>Conditional<br />Formatting</span>
      </BigTool>
      <BigTool $w={43}>
        <BigIcon>
          <Svg w={25} h={23}>
            <rect x=".5" y="1.500" width="21" height="16" fill="#fff" />
            <path d="M6 7h15.500v10.500H6Z" fill="#7dbcec" stroke={BLUE} /><path d="M.5 7h21M.5 12h21M6 1.500v16M13 1.500v16" strokeWidth=".8" />
            <path d="M24 5 13 16l2 2L24.500 7Z" fill="#fff" stroke="#555" />
            <path d="M12 16c-3 0-2 4-6 6 5 .5 9 0 9-4Z" fill="#6cb0e6" stroke={BLUE} />
          </Svg>
          <Chevron />
        </BigIcon>
        <span>Format<br />as Table</span>
      </BigTool>
      <BigTool $w={38}>
        <BigIcon>
          <Svg w={25} h={23}>
            <rect x=".5" y="1.500" width="21" height="16" fill="#fff" /><path d="M.5 5.500h21M4.500 1.500v16" strokeWidth=".8" />
            <path d="M4.500 5.500h14v9h-14Z" fill="#7dbcec" stroke={BLUE} />
            <path d="M24 5 13 16l2 2L24.500 7Z" fill="#fff" stroke="#555" />
            <path d="M12 16c-3 0-2 4-6 6 5 .5 9 0 9-4Z" fill="#6cb0e6" stroke={BLUE} />
          </Svg>
          <Chevron />
        </BigIcon>
        <span>Cell<br />Styles</span>
      </BigTool>
    </Group>

    <Group $w={78} $pad={10}>
      <Stack>
        <CellTool>
          <Svg w={13} h={12}><rect x=".5" y=".5" width="12" height="11" fill="#fff" /><path d="M.5 4h12M.5 8h12M4.500.5v11M8.500.5v11" strokeWidth=".8" /><rect x="6" y="4" width="6.500" height="4" fill="#7dbcec" stroke={BLUE} /><path d="M6 6H.8m2-2-2 2 2 2" stroke={BLUE} strokeWidth="1.300" /></Svg>
          Insert <Chevron />
        </CellTool>
        <CellTool>
          <Svg w={13} h={12}><path d="M.5 3V.5h12V3M.5 9v2.500h12V9M4.500.5V3M8.500.5V3M4.500 9v2.500M8.500 9v2.500M0 3.500h13M0 8.500h13" strokeWidth=".8" /><rect x="3" y="4" width="5" height="4" fill={BLUE} stroke={BLUE} /><path d="m8.500 3.500 4 5m0-5-4 5" stroke="#e8343b" strokeWidth="1.200" /></Svg>
          Delete <Chevron />
        </CellTool>
        <CellTool>
          <Svg w={13} h={13}><rect x=".5" y="2.500" width="12" height="10" fill="#fff" /><path d="M3.500 2.500v10M9.500 2.500v10M.5 5.500h12M.5 9.500h12" strokeWidth=".8" /><rect x="3.500" y="5" width="6" height="5" fill="#7dbcec" stroke={BLUE} /><path d="M3 1h7" stroke={BLUE} strokeWidth="1.300" /></Svg>
          Format <Chevron />
        </CellTool>
      </Stack>
    </Group>

    <Group $w={124} $pad={7}>
      <Stack>
        <SmallRow>
          <Tool $w={18} aria-label="AutoSum"><Svg w={12} h={13}><path d="M10.500 3V.8h-9L6 6.300l-4.500 5.500h9V9.500" strokeWidth="1.100" /></Svg></Tool>
          <More w={8} label="AutoSum options" />
        </SmallRow>
        <SmallRow>
          <Tool $w={18} aria-label="Fill"><Svg w={13} h={11}><rect x=".5" y=".5" width="12" height="10" fill="#fff" /><path d="M.5 2.500h12" /><path d="M6.500 3.500V9m-2-2 2 2 2-2" stroke={BLUE} strokeWidth="1.200" /></Svg></Tool>
          <More w={8} label="Fill options" />
        </SmallRow>
        <SmallRow>
          <Tool $w={18} aria-label="Clear"><Svg w={11} h={11}><path d="m.8 1 9.500 9M10 1 1 10" stroke="#e8343b" strokeWidth="1.200" /></Svg></Tool>
          <More w={8} label="Clear options" />
        </SmallRow>
      </Stack>
      <BigTool $w={42}>
        <BigIcon>
          <Svg w={24} h={23}>
            <path d="m1 9.500 3.500-9 3.500 9M2 6.500h5" stroke={BLUE} /><path d="M1.500 12.500h6L1 21.500h7" />
            <path d="M10.500 6.500h12l-4.500 6v4.500l-3 2v-6.500Z" fill="#fff" />
          </Svg>
          <Chevron />
        </BigIcon>
        <span>Sort &amp;<br />Filter</span>
      </BigTool>
      <BigTool $w={40}>
        <BigIcon>
          <Svg w={23} h={24}><circle cx="14" cy="9" r="8.300" fill="#fff" /><path d="m8 15-7.500 8" strokeWidth="1.200" /></Svg>
          <Chevron />
        </BigIcon>
        <span>Find &amp;<br />Select</span>
      </BigTool>
    </Group>

    <Group $pad={0} $last>
      <BigTool $w={43}>
        <BigIcon>
          <Svg w={18} h={24}><path d="M7 1h9l-4 8.500h5L2.500 23l4-10H1Z" fill="#83bfee" stroke="#1f77c4" strokeWidth="1.200" /></Svg>
        </BigIcon>
        Ideas
      </BigTool>
    </Group>
  </Ribbon>
);

/* ------------------------------------------------------------------ */
/* Page                                                                 */
/* ------------------------------------------------------------------ */

const DockEntry = ({ name, icon, running, badge }: { name: string; icon: React.ReactNode; running?: boolean; badge?: string }) => (
  <DockItem aria-label={name}>
    {icon}
    {badge && <Badge>{badge}</Badge>}
    {running && <Running />}
  </DockItem>
);

export default function App() {
  return (
    <>
      <GlobalStyle />
      <MenuBar>
        <MenuList aria-label="Application menu">
          <MenuItem aria-label="Apple menu"><AppleLogo /></MenuItem>
          <MenuItem $strong>Excel</MenuItem>
          {["File", "Edit", "View", "Insert", "Format", "Tools", "Data", "Window", "Help"].map((m) => (
            <MenuItem key={m}>{m}</MenuItem>
          ))}
        </MenuList>
        <StatusItems>
          <Svg w={15} h={12} stroke="#2e3338"><path d="M3.500 8.500h-3v-8h14v8h-3" /><path d="m7.500 6 4.500 5.500H3Z" fill="#2e3338" stroke="none" /></Svg>
          <Svg w={16} h={12} stroke="#2e3338" strokeWidth="1.400"><path d="M1 4.500c4-4 10-4 14 0M3.300 6.800c2.800-2.800 6.600-2.800 9.400 0M5.600 9c1.500-1.300 3.300-1.300 4.800 0" /><circle cx="8" cy="10.800" r=".9" fill="#2e3338" stroke="none" /></Svg>
          <Battery>
            58%
            <Svg w={18} h={10} stroke="#2e3338"><rect x=".5" y=".5" width="15" height="9" rx="1" /><path d="M2 2h7v6H2Z" fill="#2e3338" stroke="none" /><path d="M17 3.500v3" strokeWidth="1.500" /></Svg>
          </Battery>
          <span>Tue 9:45 PM</span>
          <span>Tony Laaksonen</span>
          <Magnifier />
          <SiriOrb size={13} />
          <Svg w={15} h={9} stroke="#2e3338" strokeWidth="1.500"><path d="M0 1h2M4 1h9M0 4.500h2M4 4.500h11M0 8h2M4 8h9" /></Svg>
        </StatusItems>
      </MenuBar>

      <Window>
        <TitleBar>
          <TitleTools>
            <Lights>
              <Light $color="#fc5b57" aria-label="Close" />
              <Light $color="#fdbc40" aria-label="Minimise" />
              <Light $color="#34c84a" aria-label="Zoom" />
            </Lights>
            <AutoSave>
              AutoSave
              <Switch><Knob type="checkbox" />OFF</Switch>
            </AutoSave>
            <TitleButton aria-label="Home">
              <Svg w={14} h={13} stroke="none"><path d="M7 0 0 6.300l1.200 1.200L7 2.300l5.800 5.200L14 6.300 11.800 4.300V1H10v1.700ZM2.500 8 7 4l4.500 4v5H8.500V9h-3v4h-3Z" fill="#fff" /></Svg>
            </TitleButton>
            <TitleButton aria-label="Save">
              <Svg w={12} h={12} stroke="none"><path fillRule="evenodd" d="M0 0h10.500L12 1.500V12H0Zm2.500 1.500v3.500h7V1.500ZM3 8v4h1.500V9.500H6V12h3V8Z" fill="#fff" /></Svg>
            </TitleButton>
            <TitleButton aria-label="Save as">
              <Svg w={15} h={13} stroke="none"><path fillRule="evenodd" d="M0 1h10l-2 2H2v3h3L3 9v2.500h7L12 9v3.500H0Z" fill="#fff" /><path d="m13 0 1.800 1.800L8 9l-2.500.7L6.200 7Z" fill="#fff" /></Svg>
            </TitleButton>
            <TitleButton $dim aria-label="Undo">
              <Svg w={12} h={11} stroke="#fff" strokeWidth="1.400"><path d="M4.500 1 1 4.500 4.500 8M1 4.500h6.500c4 0 4 6 0 6H6" /></Svg>
            </TitleButton>
            <TitleButton $w={10} $dim aria-label="Undo options"><Chevron color="#fff" /></TitleButton>
            <TitleButton aria-label="Redo">
              <Svg w={13} h={13} stroke="#fff" strokeWidth="1.700"><path d="M9 1.700A5 5 0 1 1 1.300 5.500M8 5.500V1.300h4.500" /></Svg>
            </TitleButton>
            <TitleButton aria-label="Customise toolbar">
              <Svg w={7} h={8} stroke="#fff"><path d="M1 1h5" /><path d="M.5 3.500h6l-3 3.500Z" fill="#fff" stroke="none" /></Svg>
            </TitleButton>
          </TitleTools>
          <DocTitle>
            <Svg w={10} h={12} stroke="none"><path d="M1 0h6l3 3v9H1Z" fill="#fff" /><rect x="0" y="3" width="6" height="6" fill="#2f8354" /><path d="m1.500 4.500 3 3m0-3-3 3" stroke="#fff" /></Svg>
            AS#12-FBRiskData(FIN3582)
            <Chevron color="#6fae8a" />
          </DocTitle>
          <TitleEnd>
            <TitleButton $w={24} aria-label="Search"><Magnifier size={11} color="#fff" /></TitleButton>
            <TitleButton $w={24} aria-label="Feedback">
              <Svg w={13} stroke="#fff"><circle cx="6.500" cy="6.500" r="5.800" /><path d="M3.500 7.500c1 2.700 5 2.700 6 0Z" /><path d="M4.500 3.500v1.500M8.500 3.500v1.500" strokeWidth="1.200" /></Svg>
            </TitleButton>
            <Chevron color="#fff" />
          </TitleEnd>
        </TitleBar>

        <TabRow>
          <Tabs role="tablist">
            {["Home", "Insert", "Draw", "Page Layout", "Formulas", "Data", "Review", "View"].map((t) => (
              <RibbonTab key={t} role="tab" aria-selected={t === "Home"} $active={t === "Home"}>{t}</RibbonTab>
            ))}
          </Tabs>
          <Actions>
            <ActionButton>
              <Svg w={11} h={11} stroke={GREEN}><path d="M4 3.500H1v7h8V8M3.500 8c0-3 2-4 4-4V1.500l3 3.500-3 3V6c-2 0-3 .5-4 2Z" /></Svg>
              Share
            </ActionButton>
            <ActionButton>
              <Svg w={11} h={11} stroke={GREEN}><path d="M.5 1h10v6.500H5.500L3 10V7.500H.5Z" /></Svg>
              Comments
            </ActionButton>
          </Actions>
        </TabRow>
        <RibbonTools />

        <FormulaBar>
          <NameBox>
            <NameInput aria-label="Name box" defaultValue="H3" />
            <Svg w={6} h={14} stroke="none"><path d="M3 1 5.500 5h-5ZM3 13l2.500-4h-5Z" fill="#555" /></Svg>
          </NameBox>
          <Tool $w={32} aria-label="Cancel"><Svg w={9} stroke="#bdbdbd" strokeWidth="1.800"><path d="m1 1 7 7M8 1 1 8" /></Svg></Tool>
          <Tool $w={16} aria-label="Enter"><Svg w={11} h={9} stroke="#bdbdbd" strokeWidth="1.800"><path d="m1 4.500 3 3L10 1" /></Svg></Tool>
          <Tool $w={28} aria-label="Insert function"><FxLabel>fx</FxLabel></Tool>
          <FormulaInput aria-label="Formula" />
          <Tool $w={8} aria-label="Expand formula bar"><Svg w={6} h={5} stroke="none"><path d="M0 0h6L3 5Z" fill="#666" /></Svg></Tool>
        </FormulaBar>

        <Worksheet />

        <SheetBar>
          <SheetNav>
            <Tool $w={16} aria-label="Previous sheet"><Svg w={6} h={8} stroke="none"><path d="M6 0v8L0 4Z" fill="#777" /></Svg></Tool>
            <Tool $w={16} aria-label="Next sheet"><Svg w={6} h={8} stroke="none"><path d="M0 0v8l6-4Z" fill="#777" /></Svg></Tool>
          </SheetNav>
          <SheetTab $w={70} $active>Positions</SheetTab>
          <SheetTab $w={72}>BondData</SheetTab>
          <SheetTab $w={31} aria-label="Add sheet"><Svg w={9} stroke="#555"><path d="M4.500 0v9M0 4.500h9" /></Svg></SheetTab>
        </SheetBar>
        <StatusBar>
          <ViewButton $on aria-label="Normal view"><Svg w={11} stroke="currentColor"><path d="M.5.5h10v10H.5ZM3.500.5v10M7.500.5v10M.5 3.500h10M.5 7.500h10" /></Svg></ViewButton>
          <ViewButton aria-label="Page layout view"><Svg w={11} stroke="currentColor"><path d="M.5.5h10v10H.5ZM3 2.500h5v6H3ZM4 4.500h3M4 6.500h3" /></Svg></ViewButton>
          <ViewButton aria-label="Page break view"><Svg w={11} stroke="currentColor"><path d="M.5.5h10v10H.5ZM.5 6.500h7v-6M4 .5v6" /></Svg></ViewButton>
          <ZoomButton aria-label="Zoom out"><Svg w={7} stroke="#444" strokeWidth="1.400"><path d="M0 3.500h7" /></Svg></ZoomButton>
          <ZoomRange type="range" aria-label="Zoom" defaultValue="50" />
          <ZoomButton aria-label="Zoom in"><Svg w={7} stroke="#444" strokeWidth="1.400"><path d="M0 3.500h7M3.500 0v7" /></Svg></ZoomButton>
          <ZoomValue>100%</ZoomValue>
        </StatusBar>
      </Window>

      <Dock aria-label="Dock">
        <DockApps>{apps.map((a) => <DockEntry key={a.name} {...a} />)}</DockApps>
        <DockDocs>{documents.map((d) => <DockEntry key={d.name} {...d} />)}</DockDocs>
      </Dock>
    </>
  );
}
